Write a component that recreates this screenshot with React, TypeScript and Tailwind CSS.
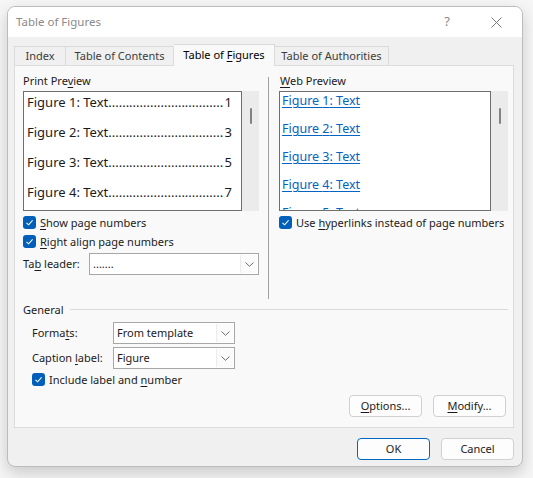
import React from "react";

const ui = { fontFamily: '"Noto Sans", "Open Sans", sans-serif' };

function U({ children }: { children: React.ReactNode }) {
  return <span className="underline underline-offset-2 decoration-1">{children}</span>;
}

function Check({ children, className = "" }: { children: React.ReactNode; className?: string }) {
  return (
    <div className={`flex items-center gap-[4px] h-[19px] ${className}`}>
      <div className="w-[13px] h-[13px] shrink-0 rounded-[3px] bg-[#005fb8] flex items-center justify-center">
        <svg width="9" height="9" viewBox="0 0 9 9">
          <path d="M1.5 4.8 L3.6 6.8 L7.6 2.4" fill="none" stroke="white" strokeWidth="1.1" />
        </svg>
      </div>
      <span className="text-[11px] text-[#1b1b1b] leading-none whitespace-nowrap">{children}</span>
    </div>
  );
}

function Chevron() {
  return (
    <svg width="9" height="5" viewBox="0 0 9 5">
      <path d="M0.5 0.5 L4.5 4.3 L8.5 0.5" fill="none" stroke="#6b6b6b" strokeWidth="1" />
    </svg>
  );
}

function Select({ value, w }: { value: string; w: string }) {
  return (
    <div className={`${w} h-[22px] border border-[#a7a7a7] bg-white flex items-stretch`}>
      <div className="flex-1 flex items-center pl-[3px] text-[11px] text-[#1b1b1b]">{value}</div>
      <div className="w-[17px] my-[1px] mr-[1px] bg-[#fbfbfb] border-l border-[#ececec] flex items-center justify-center">
        <Chevron />
      </div>
    </div>
  );
}

function Button({ children, primary }: { children: React.ReactNode; primary?: boolean }) {
  return (
    <div
      className={`w-[73px] h-[22px] rounded-[4px] bg-[#fdfdfd] flex items-center justify-center text-[11px] text-[#1b1b1b] border ${
        primary ? "border-[#0067c0]" : "border-[#d0d0d0]"
      }`}
    >
      <span>{children}</span>
    </div>
  );
}

function Track() {
  return (
    <div className="w-[17px] bg-[#ebebeb] flex justify-center pt-[17px]">
      <div className="w-[2px] h-[16px] bg-[#838383] rounded-[1px]" />
    </div>
  );
}

const prints = ["1", "3", "5", "7"];
const leader = ".................................";

export default function App() {
  return (
    <div className="w-[533px] h-[478px] bg-[#f6f6f6] relative overflow-hidden" style={ui}>
      <div className="absolute left-[7px] top-[6px] w-[516px] h-[461px] rounded-[8px] border border-[#bcbcbc] overflow-hidden flex flex-col bg-[#f0f0f0] shadow-[0_6px_16px_rgba(0,0,0,0.18)]">
        {/* title bar */}
        <div className="h-[30px] bg-white flex items-center pl-[8px] pr-[20px] shrink-0">
          <span className="text-[11.5px] text-[#8a8a8a] flex-1">Table of Figures</span>
          <span className="text-[13px] text-[#8a8a8a] mr-[41px]">?</span>
          <svg width="11" height="11" viewBox="0 0 11 11">
            <path d="M0.5 0.5 L10.5 10.5 M10.5 0.5 L0.5 10.5" stroke="#777" strokeWidth="1" />
          </svg>
        </div>

        {/* body */}
        <div className="flex-1 flex flex-col pl-[6px] pr-[8px] pt-[7px]">
          {/* tabs */}
          <div className="flex items-end h-[21px] text-[11px] text-[#3c3c3c]">
            <div className="w-[52px] h-[19px] border border-b-0 border-[#dadada] flex items-center justify-center">Index</div>
            <div className="w-[108px] h-[19px] border border-b-0 border-l-0 border-[#dadada] flex items-center justify-center">Table of Contents</div>
            <div className="w-[101px] h-[22px] border border-b-0 border-l-0 border-[#dadada] bg-[#f9f9f9] text-black flex items-center justify-center relative z-10 -mb-px pb-px">
              <span>
                Table of <U>F</U>igures
              </span>
            </div>
            <div className="w-[114px] h-[19px] border border-b-0 border-l-0 border-[#dadada] flex items-center justify-center">Table of Authorities</div>
          </div>

          {/* panel */}
          <div className="h-[363px] bg-[#f9f9f9] border border-[#dcdcdc] flex flex-col pl-[8px] pr-[5px] pt-[6px] text-[#1b1b1b]">
            <div className="flex h-[223px]">
              {/* print preview */}
              <div className="w-[236px] flex flex-col">
                <div className="text-[11px] h-[17px] leading-[17px]">
                  Print Pre<U>v</U>iew
                </div>
                <div className="flex h-[120px] mt-[2px]">
                  <div className="w-[219px] border border-[#6f6f6f] bg-white overflow-hidden pl-[3px] pr-[9px] text-[13px] text-[#1b1b1b]">
                    {prints.map((p, i) => (
                      <div key={p} className="h-[30px] flex justify-between items-start leading-[20px] whitespace-nowrap">
                        <span>
                          Figure {i + 1}: Text{leader}
                        </span>
                        <span>{p}</span>
                      </div>
                    ))}
                  </div>
                  <Track />
                </div>
                <div className="mt-[2px]">
                  <Check>
                    <U>S</U>how page numbers
                  </Check>
                  <Check>
                    <U>R</U>ight align page numbers
                  </Check>
                </div>
                <div className="flex items-center mt-[2px]">
                  <span className="text-[11px] w-[66px]">
                    Ta<U>b</U> leader:
                  </span>
                  <Select value="......." w="w-[170px]" />
                </div>
              </div>

              {/* separator */}
              <div className="w-[1px] bg-[#a0a0a0] ml-[9px] mt-[5px] h-[222px]" />

              {/* web preview */}
              <div className="flex-1 flex flex-col pl-[10px]">
                <div className="text-[11px] h-[17px] leading-[17px] pl-[1px]">
                  <U>W</U>eb Preview
                </div>
                <div className="flex h-[120px] mt-[2px]">
                  <div className="w-[212px] border border-[#6f6f6f] bg-white overflow-hidden pl-[2px] text-[12.5px] text-[#0563c1]">
                    {[1, 2, 3, 4, 5].map((n) => (
                      <div key={n} className="h-[28px] leading-[18px]">
                        <span className="underline underline-offset-2 decoration-1">Figure {n}: Text</span>
                      </div>
                    ))}
                  </div>
                  <Track />
                </div>
                <div className="mt-[2px]">
                  <Check>
                    Use <U>h</U>yperlinks instead of page numbers
                  </Check>
                </div>
              </div>
            </div>

            {/* general */}
            <div className="flex items-center h-[16px] mt-[7px]">
              <span className="text-[11px] mr-[6px]">General</span>
              <div className="flex-1 h-px bg-[#dadada] -mt-[2px]" />
            </div>
            <div className="pl-[9px] mt-[4px] flex flex-col gap-[3px]">
              <div className="flex items-center">
                <span className="text-[11px] w-[81px]">
                  Forma<U>t</U>s:
                </span>
                <Select value="From template" w="w-[122px]" />
              </div>
              <div className="flex items-center">
                <span className="text-[11px] w-[81px]">
                  Caption <U>l</U>abel:
                </span>
                <Select value="Figure" w="w-[122px]" />
              </div>
              <Check className="-mt-[2px]">
                Include label and <U>n</U>umber
              </Check>
            </div>
            <div className="flex justify-end gap-[11px] mt-[6px] pr-[2px]">
              <Button>
                <U>O</U>ptions...
              </Button>
              <Button>
                <U>M</U>odify...
              </Button>
            </div>
          </div>

          {/* footer */}
          <div className="flex justify-end gap-[11px] mt-[10px]">
            <Button primary>OK</Button>
            <Button>Cancel</Button>
          </div>
        </div>
      </div>
    </div>
  );
}
